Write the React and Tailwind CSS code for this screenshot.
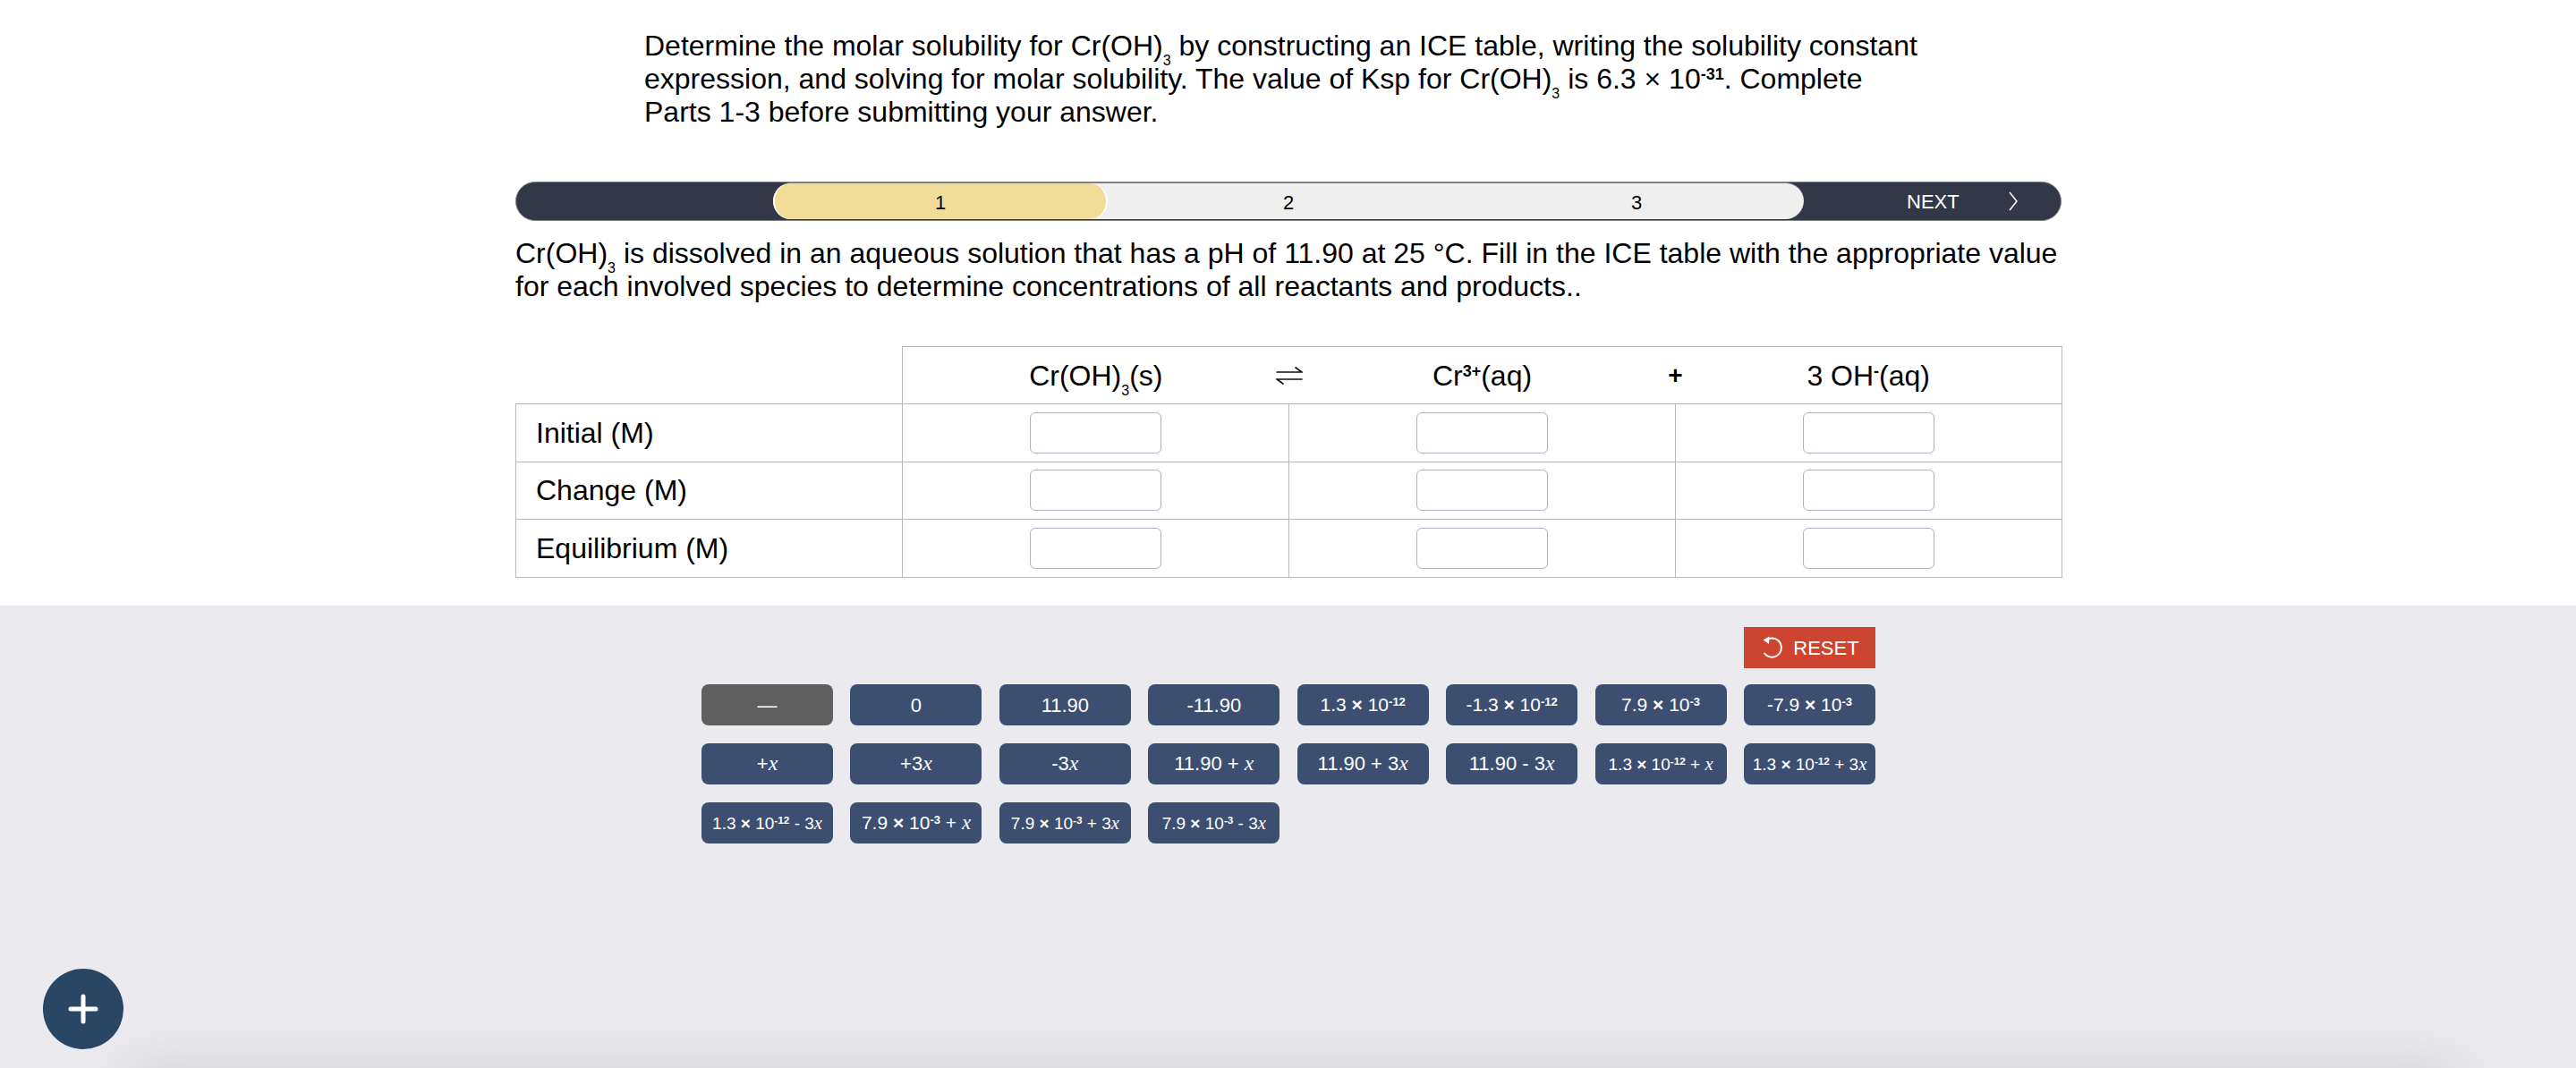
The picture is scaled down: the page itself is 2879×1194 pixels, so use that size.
import React from 'react';

const font = "font-['Liberation_Sans',Arial,sans-serif]";

function Sub({ children }) {
  return <sub className="text-[16px] leading-none relative -bottom-[11px] align-baseline">{children}</sub>;
}

function Sup({ children }) {
  return <sup className="text-[18px] font-bold leading-none relative -top-[10px] align-baseline">{children}</sup>;
}

function X() {
  return <i className="font-['Liberation_Serif',serif] text-[1.08em]">x</i>;
}

function Pow({ e }) {
  return <sup className="text-[0.62em] font-bold leading-none relative -top-[0.45em] align-baseline">{e}</sup>;
}

const sci = (base, e) => <>{base} <b>×</b> 10<Pow e={e} /></>;

const choices = [
  [{ label: '—', off: true }, { label: '0' }, { label: '11.90' }, { label: '-11.90' },
   { label: sci('1.3', '-12'), size: 'text-[21px]' }, { label: sci('-1.3', '-12'), size: 'text-[21px]' }, { label: sci('7.9', '-3'), size: 'text-[21px]' }, { label: sci('-7.9', '-3'), size: 'text-[21px]' }],
  [{ label: <>+<X /></> }, { label: <>+3<X /></> }, { label: <>-3<X /></> }, { label: <>11.90 + <X /></> },
   { label: <>11.90 + 3<X /></> }, { label: <>11.90 - 3<X /></> }, { label: <>{sci('1.3', '-12')} + <X /></>, size: 'text-[19px]' }, { label: <>{sci('1.3', '-12')} + 3<X /></>, size: 'text-[19px]' }],
  [{ label: <>{sci('1.3', '-12')} - 3<X /></>, size: 'text-[19px]' }, { label: <>{sci('7.9', '-3')} + <X /></>, size: 'text-[21px]' }, { label: <>{sci('7.9', '-3')} + 3<X /></>, size: 'text-[19px]' }, { label: <>{sci('7.9', '-3')} - 3<X /></>, size: 'text-[19px]' }],
];

function Choice({ label, off, size = 'text-[22px]' }) {
  return (
    <button className={`h-[46px] rounded-lg text-white flex items-center justify-center whitespace-nowrap ${size} ${off ? 'bg-[#5f5f5f]' : 'bg-[#3c4f70]'}`}>
      <span>{label}</span>
    </button>
  );
}

function Cell() {
  return (
    <td className="border border-[#b8b8b8] text-center align-middle p-0">
      <div className="w-[147px] h-[46px] mx-auto border border-[#aeb4c8] rounded-md bg-white" />
    </td>
  );
}

function Equilibrium() {
  return (
    <svg width="30" height="20" viewBox="0 0 30 20" fill="none" stroke="#111" strokeWidth="1.7">
      <path d="M0.5 6H29L21.5 0.5" />
      <path d="M29.5 14H1L8.5 19.5" />
    </svg>
  );
}

const rows = ['Initial (M)', 'Change (M)', 'Equilibrium (M)'];

export default function App() {
  return (
    <div className={`h-screen overflow-hidden flex flex-col relative bg-white text-black ${font}`}>
      <div className="h-[677px] shrink-0 pt-[33px]">
        <p className="ml-[720px] text-[32px] leading-[37px] whitespace-nowrap">
          Determine the molar solubility for Cr(OH)<Sub>3</Sub> by constructing an ICE table, writing the solubility constant<br />
          expression, and solving for molar solubility. The value of Ksp for Cr(OH)<Sub>3</Sub> is 6.3 × 10<Sup>-31</Sup>. Complete<br />
          Parts 1-3 before submitting your answer.
        </p>

        <div className="w-[1728px] ml-[576px] mt-[59px]">
          <div className="h-[44px] rounded-full bg-[#323848] border border-[#7f7f7f] flex items-stretch text-[22px]">
            <div className="ml-[287px] w-[1152px] mb-[1px] bg-[#efefef] rounded-[22px] border-t border-t-[#7f7f7f] flex items-center relative">
              <div className="absolute left-0 top-0 bottom-0 w-[374px] bg-[#f2dd98] rounded-full border-x-2 border-white" />
              <span className="w-[374px] pt-[2px] text-center relative">1</span>
              <span className="w-[404px] pt-[2px] text-center">2</span>
              <span className="w-[374px] pt-[2px] text-center">3</span>
            </div>
            <div className="flex-1 flex items-center text-white relative">
              <span className="ml-[115px]">NEXT</span>
              <svg className="ml-[55px]" width="10" height="22" viewBox="0 0 10 22" fill="none" stroke="white" strokeWidth="1.5">
                <path d="M1 1L9 11L1 21" />
              </svg>
            </div>
          </div>

          <p className="mt-[18px] text-[32px] leading-[37px] whitespace-nowrap">
            Cr(OH)<Sub>3</Sub> is dissolved in an aqueous solution that has a pH of 11.90 at 25 °C. Fill in the ICE table with the appropriate value<br />
            for each involved species to determine concentrations of all reactants and products..
          </p>

          <table className="mt-[48px] w-[1728px] table-fixed border-collapse text-[32px]">
            <colgroup>
              <col className="w-[432px]" />
              <col className="w-[432px]" />
              <col className="w-[432px]" />
              <col className="w-[432px]" />
            </colgroup>
            <thead>
              <tr className="h-[64px]">
                <th className="font-normal" />
                <th colSpan={3} className="font-normal border border-[#b8b8b8] p-0">
                  <div className="grid grid-cols-12 items-center">
                    <span className="row-start-1 col-start-1 col-span-4 text-center">Cr(OH)<Sub>3</Sub>(s)</span>
                    <span className="row-start-1 col-start-4 col-span-2 flex justify-center"><Equilibrium /></span>
                    <span className="row-start-1 col-start-5 col-span-4 text-center">Cr<Sup>3+</Sup>(aq)</span>
                    <span className="row-start-1 col-start-8 col-span-2 text-center text-[28px] font-bold">+</span>
                    <span className="row-start-1 col-start-9 col-span-4 text-center">3 OH<Sup>-</Sup>(aq)</span>
                  </div>
                </th>
              </tr>
            </thead>
            <tbody>
              {rows.map(r => (
                <tr key={r} className="h-[64.5px]">
                  <td className="border border-[#b8b8b8] pl-[22px] p-0">{r}</td>
                  <Cell />
                  <Cell />
                  <Cell />
                </tr>
              ))}
            </tbody>
          </table>
        </div>
      </div>

      <div className="flex-1 bg-[#eaeaef]">
        <div className="w-[1312px] ml-[784px] pt-[24px]">
          <div className="flex justify-end mb-[18px]">
            <button className="w-[147px] h-[46px] bg-[#cc4530] text-white text-[22px] flex items-center justify-center gap-[11px] pl-[2px]">
              <svg width="24" height="26" viewBox="0 0 24 26" fill="none" stroke="white" strokeWidth="1.9">
                <path d="M7.5 3.2A10.6 10.6 0 1 1 2.6 19" />
                <path d="M8.5 0.5L1.5 4.5L8 9" fill="white" stroke="none" />
              </svg>
              RESET
            </button>
          </div>
          <div className="flex flex-col gap-[20px]">
            {choices.map((row, i) => (
              <div key={i} className="grid grid-cols-8 gap-x-[19.4px]">
                {row.map((c, j) => <Choice key={j} {...c} />)}
              </div>
            ))}
          </div>
        </div>
      </div>

      {/* drawer peeking in from below the window */}
      <div className="absolute left-[140px] right-[130px] top-full h-[40px] shadow-[0_0_60px_rgba(0,0,0,0.13)]" />

      <button className="absolute left-[48px] bottom-[21px] w-[90px] h-[90px] rounded-full bg-[#2a4665] flex items-center justify-center">
        <svg width="34" height="34" viewBox="0 0 34 34" stroke="white" strokeWidth="5" strokeLinecap="round">
          <path d="M17 3V31M3 17H31" />
        </svg>
      </button>
    </div>
  );
}
